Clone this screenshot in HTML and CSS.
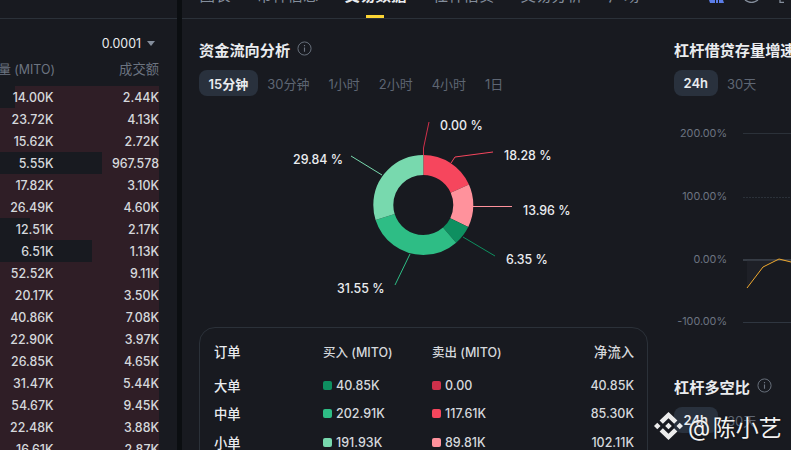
FILE: index.html
```html
<!DOCTYPE html>
<html lang="zh-CN">
<head>
    <meta charset="UTF-8">
    <meta name="viewport" content="width=device-width, initial-scale=1.0">
    <title>交易数据</title>
    <link rel="stylesheet" href="styles.css">
</head>
<body>
    <div class="page">
        <aside class="trades">
            <div class="top-blank"></div>
            <div class="precision"><span>0.0001</span><i class="caret"></i></div>
            <div class="trade-head"><span>成交量 (MITO)</span><span class="cjk">成交额</span></div>
            <div class="trade-row gap-15"><span>14.00K</span><span>2.44K</span></div>
            <div class="trade-row"><span>23.72K</span><span>4.13K</span></div>
            <div class="trade-row"><span>15.62K</span><span>2.72K</span></div>
            <div class="trade-row gap-102"><span>5.55K</span><span>967.578</span></div>
            <div class="trade-row"><span>17.82K</span><span>3.10K</span></div>
            <div class="trade-row"><span>26.49K</span><span>4.60K</span></div>
            <div class="trade-row gap-30"><span>12.51K</span><span>2.17K</span></div>
            <div class="trade-row gap-92"><span>6.51K</span><span>1.13K</span></div>
            <div class="trade-row"><span>52.52K</span><span>9.11K</span></div>
            <div class="trade-row"><span>20.17K</span><span>3.50K</span></div>
            <div class="trade-row"><span>40.86K</span><span>7.08K</span></div>
            <div class="trade-row"><span>22.90K</span><span>3.97K</span></div>
            <div class="trade-row"><span>26.85K</span><span>4.65K</span></div>
            <div class="trade-row"><span>31.47K</span><span>5.44K</span></div>
            <div class="trade-row"><span>54.67K</span><span>9.45K</span></div>
            <div class="trade-row"><span>22.48K</span><span>3.88K</span></div>
            <div class="trade-row"><span>16.61K</span><span>2.87K</span></div>
        </aside>

        <main class="content">
            <nav class="tabs">
                <span class="tab">图表</span>
                <span class="tab">币种信息</span>
                <span class="tab active">交易数据</span>
                <span class="tab">杠杆借贷</span>
                <span class="tab">交易分析</span>
                <span class="tab">广场</span>
                <div class="tab-icons">
                    <svg width="15" height="3" viewBox="0 0 15 3"><path d="M0 0h6v3H1zM7 0h2v3H7zM10 0h4l1 3h-5z" fill="#5b7de8"/></svg>
                    <svg width="15" height="3" viewBox="0 0 15 3"><path d="M1 0q6.500 5 13 0" fill="none" stroke="#848e9c" stroke-width="1.300"/></svg>
                    <svg width="5" height="3" viewBox="0 0 5 3"><path d="M1 0v2.500h4" fill="none" stroke="#848e9c" stroke-width="1.300"/></svg>
                </div>
            </nav>

            <div class="columns">
                <section class="flow">
                    <h2 class="title">资金流向分析<svg class="info" viewBox="0 0 16 16"><circle cx="8" cy="8" r="7" fill="none" stroke="currentColor"/><path d="M8 7v4.500M8 4.200v1.300" stroke="currentColor" stroke-width="1.200"/></svg></h2>
                    <div class="pills">
                        <span class="pill active">15分钟</span>
                        <span class="pill">30分钟</span>
                        <span class="pill">1小时</span>
                        <span class="pill">2小时</span>
                        <span class="pill">4小时</span>
                        <span class="pill">1日</span>
                    </div>

                    <svg class="donut" width="460" height="231" viewBox="199 96 460 231">
                        <g fill="none" stroke-width="20" transform="rotate(-90 423.300 205)">
                            <circle cx="423.300" cy="205" r="40" pathLength="100" stroke="#f6465d" stroke-dasharray="18.28 100"/>
                            <circle cx="423.300" cy="205" r="40" pathLength="100" stroke="#ff929c" stroke-dasharray="13.96 100" stroke-dashoffset="-18.28"/>
                            <circle cx="423.300" cy="205" r="40" pathLength="100" stroke="#0e8f60" stroke-dasharray="6.35 100" stroke-dashoffset="-32.24"/>
                            <circle cx="423.300" cy="205" r="40" pathLength="100" stroke="#2ebd85" stroke-dasharray="31.55 100" stroke-dashoffset="-38.59"/>
                            <circle cx="423.300" cy="205" r="40" pathLength="100" stroke="#78d9ae" stroke-dasharray="29.86 100" stroke-dashoffset="-70.14"/>
                        </g>
                        <g fill="none" stroke-width="1">
                            <path d="M423.500 155v-7l5.500-26" stroke="#cf304a"/>
                            <path d="M451 163l4-6 38-5" stroke="#f6465d"/>
                            <path d="M473 206.500h39" stroke="#ff929c"/>
                            <path d="M463 237l32 19" stroke="#0e8f60"/>
                            <path d="M410 254l-15 31" stroke="#2ebd85"/>
                            <path d="M382 175l-31-19" stroke="#78d9ae"/>
                        </g>
                        <g class="donut-label">
                            <text x="440" y="130">0.00 %</text>
                            <text x="504" y="160">18.28 %</text>
                            <text x="523" y="215">13.96 %</text>
                            <text x="506" y="264">6.35 %</text>
                            <text x="337" y="293">31.55 %</text>
                            <text x="293" y="164">29.84 %</text>
                        </g>
                    </svg>

                    <div class="orders">
                        <div class="order-row head">
                            <span class="kind">订单</span><span>买入 (MITO)</span><span>卖出 (MITO)</span><span class="net cjk">净流入</span>
                        </div>
                        <div class="order-row">
                            <span class="kind">大单</span>
                            <span class="cell"><i class="dot big-buy"></i>40.85K</span>
                            <span class="cell"><i class="dot big-sell"></i>0.00</span>
                            <span class="net">40.85K</span>
                        </div>
                        <div class="order-row">
                            <span class="kind">中单</span>
                            <span class="cell"><i class="dot mid-buy"></i>202.91K</span>
                            <span class="cell"><i class="dot mid-sell"></i>117.61K</span>
                            <span class="net">85.30K</span>
                        </div>
                        <div class="order-row">
                            <span class="kind">小单</span>
                            <span class="cell"><i class="dot small-buy"></i>191.93K</span>
                            <span class="cell"><i class="dot small-sell"></i>89.81K</span>
                            <span class="net">102.11K</span>
                        </div>
                    </div>
                </section>

                <section class="margin">
                    <h2 class="title nowrap">杠杆借贷存量增速</h2>
                    <div class="pills">
                        <span class="pill active">24h</span>
                        <span class="pill">30天</span>
                    </div>
                    <svg class="line-chart" width="117" height="231" viewBox="674 96 117 231">
                        <g class="axis-label" text-anchor="end">
                            <text x="727" y="137">200.00%</text>
                            <text x="727" y="200">100.00%</text>
                            <text x="727" y="263">0.00%</text>
                            <text x="727" y="325">-100.00%</text>
                        </g>
                        <g stroke-width="1">
                            <path d="M743 133.500h48" stroke="#2b3139"/>
                            <path d="M743 197.500h48" stroke="#2b3139" stroke-dasharray="2 1"/>
                            <path d="M743 260h48" stroke="#363c45" stroke-width="2"/>
                            <path d="M743 322.500h48" stroke="#2f3640"/>
                        </g>
                        <path d="M747 288l16-21 16-8 12 3V260H747z" fill="#2b2f36" opacity=".35"/>
                        <path d="M747 288l16-21 16-8 12 3" fill="none" stroke="#f0a92e"/>
                    </svg>
                    <h2 class="title second">杠杆多空比<svg class="info" viewBox="0 0 16 16"><circle cx="8" cy="8" r="7" fill="none" stroke="currentColor"/><path d="M8 7v4.500M8 4.200v1.300" stroke="currentColor" stroke-width="1.200"/></svg></h2>
                    <div class="pills">
                        <span class="pill active">24h</span>
                        <span class="pill">30天</span>
                    </div>
                </section>
            </div>
        </main>
    </div>

    <div class="watermark">
        <svg width="29" height="28" viewBox="0 0 32 32" preserveAspectRatio="none" fill="#ececec">
            <path d="M9.790 13.450L16 7.240l6.210 6.210 3.610-3.610L16 0 6.180 9.840zM0 16l3.610-3.610L7.220 16l-3.610 3.610zM9.790 18.550L16 24.760l6.210-6.210 3.610 3.610L16 32l-9.820-9.840zM24.780 16l3.610-3.610L32 16l-3.610 3.610zM19.660 16L16 12.340 12.340 16 16 19.660z"/>
        </svg>
        <span>@ 陈小艺</span>
    </div>
</body>
</html>
```
FILE: styles.css
```css
* {
    box-sizing: border-box;
}
html, body {
    margin: 0;
    height: 450px;
    overflow: hidden;
}
body {
    position: relative;
    background-color: #0b0e11;
    color: #eaecef;
    font-family: Inter, "Noto Sans CJK SC", sans-serif;
}
.page {
    display: flex;
    gap: 5px;
    height: 450px;
}
.cjk {
    font-size: 13.3px;
}

/* left trades list */
.trades {
    width: 177px;
    flex: none;
    background-color: #181a20;
    padding-right: 18px;
    font-size: 12.4px;
    overflow: hidden;
}
.top-blank {
    height: 19px;
    margin-right: -18px;
    border-bottom: 1px solid #2b3139;
}
.precision {
    display: flex;
    justify-content: flex-end;
    align-items: center;
    gap: 6px;
    height: 40px;
    padding: 8px 4px 0 0;
}
.caret {
    width: 0;
    height: 0;
    border-left: 4px solid transparent;
    border-right: 4px solid transparent;
    border-top: 5px solid #848e9c;
}
.trade-head {
    display: grid;
    grid-template-columns: 55px 1fr;
    align-items: center;
    height: 18px;
    margin-bottom: 9px;
    color: #6c7480;
    white-space: nowrap;
}
.trade-head span {
    justify-self: end;
}
.trade-row {
    display: grid;
    grid-template-columns: 53.5px 1fr;
    align-items: center;
    height: 22px;
    color: #d5d8dc;
    font-weight: 500;
    text-align: right;
    background-color: #2f1e26;
}
.gap-15 {
    background: linear-gradient(90deg, #181a20 15px, #2f1e26 15px);
}
.gap-30 {
    background: linear-gradient(90deg, #181a20 30px, #2f1e26 30px);
}
.gap-92 {
    background: linear-gradient(90deg, #181a20 92px, #2f1e26 92px);
}
.gap-102 {
    background: linear-gradient(90deg, #181a20 102px, #2f1e26 102px);
}

/* main part */
.content {
    flex: 1;
    min-width: 0;
    background-color: #181a20;
}
.tabs {
    display: flex;
    align-items: flex-end;
    height: 19px;
    padding: 0 0 13px 17.5px;
    gap: 26px;
    border-bottom: 1px solid #2b3139;
    overflow: hidden;
    font-size: 15.5px;
    line-height: 19px;
    color: #848e9c;
}
.tab {
    flex: none;
    position: relative;
}
.tab.active {
    color: #eaecef;
    font-weight: 600;
}
.tab.active::after {
    content: "";
    position: absolute;
    left: 21px;
    bottom: -13px;
    width: 18px;
    height: 3px;
    background-color: #fcd535;
}
.tab-icons {
    display: flex;
    align-self: flex-start;
    gap: 20px;
    margin-left: 43px;
}
.tab-icons svg {
    display: block;
    flex: none;
}
.columns {
    display: flex;
    padding-left: 17px;
    overflow: hidden;
}
.flow {
    width: 449px;
    flex: none;
}
.margin {
    margin-left: 26px;
    width: 117px;
    flex: none;
}
.title {
    display: flex;
    align-items: center;
    gap: 7px;
    margin: 19px 0 0;
    height: 21px;
    font-size: 15.2px;
    font-weight: 600;
    color: #eaecef;
    white-space: nowrap;
}
.title.second {
    margin-top: 48px;
}
.info {
    width: 15px;
    height: 15px;
    color: #6c7480;
}
.pills {
    display: flex;
    margin-top: 11px;
    font-size: 13px;
    color: #5e6673;
}
.pill {
    display: flex;
    align-items: center;
    height: 26px;
    padding: 0 9.5px;
    border-radius: 8px;
    white-space: nowrap;
}
.pill.active {
    background-color: #29313d;
    color: #eaecef;
    font-weight: 600;
}
.donut,
.line-chart {
    display: block;
}
.donut-label text {
    font-size: 12.4px;
    font-weight: 500;
    fill: #eaecef;
}
.axis-label text {
    font-size: 10.8px;
    fill: #6c7480;
}
.orders {
    border: 1px solid #2b3139;
    border-radius: 16px;
    padding: 12px 13px 0 14px;
    font-size: 12.5px;
    font-weight: 500;
    height: 140px;
}
.order-row {
    display: grid;
    grid-template-columns: 109px 109px 1fr 100px;
    align-items: center;
    height: 28.5px;
    color: #d5d8dc;
}
.order-row.head {
    height: 22px;
    margin-bottom: 9px;
}
.kind {
    font-size: 13.3px;
    color: #eaecef;
}
.net {
    text-align: right;
}
.cell {
    display: flex;
    align-items: center;
    gap: 4px;
}
.dot {
    width: 9px;
    height: 9px;
    border-radius: 2px;
}
.big-buy { background-color: #0e8f60; }
.big-sell { background-color: #cf304a; }
.mid-buy { background-color: #2ebd85; }
.mid-sell { background-color: #f6465d; }
.small-buy { background-color: #78d9ae; }
.small-sell { background-color: #ff929c; }

/* watermark over the page */
.watermark {
    position: absolute;
    left: 654px;
    top: 409px;
    display: flex;
    align-items: center;
    gap: 5px;
    color: #f2f2f2;
    font-size: 23px;
    word-spacing: -4px;
    text-shadow: 0 0 2px rgba(0, 0, 0, 0.6);
    white-space: nowrap;
}
```
